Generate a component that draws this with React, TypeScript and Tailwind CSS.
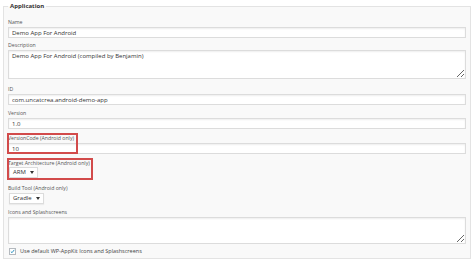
import React from "react";

const labelCls = "block h-[8px] text-[5.2px] leading-[8px] text-[#555] whitespace-nowrap";
const inputCls =
  "block w-full h-[11px] border border-[#dcdcdc] bg-white px-[3px] text-[6px] leading-[9px] text-[#333] shadow-[inset_0_1px_2px_rgba(0,0,0,0.07)] outline-none";
const areaCls =
  "block w-full border border-[#dcdcdc] bg-white px-[3px] py-[1px] text-[6px] leading-[9px] text-[#333] shadow-[inset_0_1px_2px_rgba(0,0,0,0.07)] outline-none";

const Arrow = () => (
  <svg width="4" height="3" viewBox="0 0 4 3">
    <path d="M0 0h4L2 3z" fill="#333" />
  </svg>
);

const Select: React.FC<{ value: string; className?: string }> = ({ value, className = "" }) => (
  <div
    className={`flex w-fit h-[11px] items-center gap-[4px] border border-[#dcdcdc] bg-white pl-[3px] pr-[3px] text-[6px] leading-[9px] text-[#333] shadow-[0_1px_1px_rgba(0,0,0,0.05)] ${className}`}
  >
    <span>{value}</span>
    <Arrow />
  </div>
);

export default function App() {
  return (
    <div className="w-[474px] h-[264px] overflow-hidden bg-white font-['Open_Sans',sans-serif]">
      <fieldset className="ml-[3px] mt-[1px] h-[258px] w-[468px] border border-[#e3e3e3] bg-[#f9f9f9] px-[4px] pt-[7px]">
        <legend className="px-[2px] text-[6px] font-bold leading-[10px] text-[#333]">Application</legend>

        <label className={labelCls}>Name</label>
        <input className={`${inputCls} mt-[1px]`} defaultValue="Demo App For Android" />

        <label className={`${labelCls} mt-[3px]`}>Description</label>
        <textarea
          className={`${areaCls} mt-[1px] h-[29px]`}
          defaultValue="Demo App For Android (compiled by Benjamin)"
        />

        <label className={`${labelCls} mt-[6px]`}>ID</label>
        <input className={`${inputCls} mt-[1px]`} defaultValue="com.uncatcrea.android-demo-app" />

        <label className={`${labelCls} mt-[4px]`}>Version</label>
        <input className={`${inputCls} mt-[1px]`} defaultValue="1.0" />

        <div className="relative mt-[5px]">
          <label className={labelCls}>VersionCode (Android only)</label>
          <input className={`${inputCls} mt-[1px] h-[10px]`} defaultValue="10" />
          <div className="pointer-events-none absolute -left-[1px] -top-[1px] h-[21px] w-[71px] border-2 border-[#d24b4b]" />
        </div>

        <div className="relative mt-[5px]">
          <label className={labelCls}>Target Architecture (Android only)</label>
          <Select value="ARM" className="ml-[1px]" />
          <div className="pointer-events-none absolute -left-[1px] -top-[1px] h-[22px] w-[86px] border-2 border-[#d24b4b]" />
        </div>

        <label className={`${labelCls} mt-[6px]`}>Build Tool (Android only)</label>
        <Select value="Gradle" className="mt-[1px] ml-[1px]" />

        <label className={`${labelCls} mt-[4px]`}>Icons and Splashscreens</label>
        <textarea className={`${areaCls} mt-[1px] h-[27px]`} />

        <div className="mt-[3px] flex h-[8px] items-center gap-[4px] text-[5.5px] text-[#444]">
          <span className="ml-[1px] flex h-[7px] w-[7px] items-center justify-center border border-[#b4b9be] bg-white">
            <svg width="7" height="7" viewBox="0 0 7 7">
              <path d="M1.2 3.6L2.8 5.2L6 1.2" stroke="#1e8cbe" strokeWidth="1.3" fill="none" />
            </svg>
          </span>
          <span>Use default WP-AppKit Icons and Splashscreens</span>
        </div>
      </fieldset>
    </div>
  );
}
